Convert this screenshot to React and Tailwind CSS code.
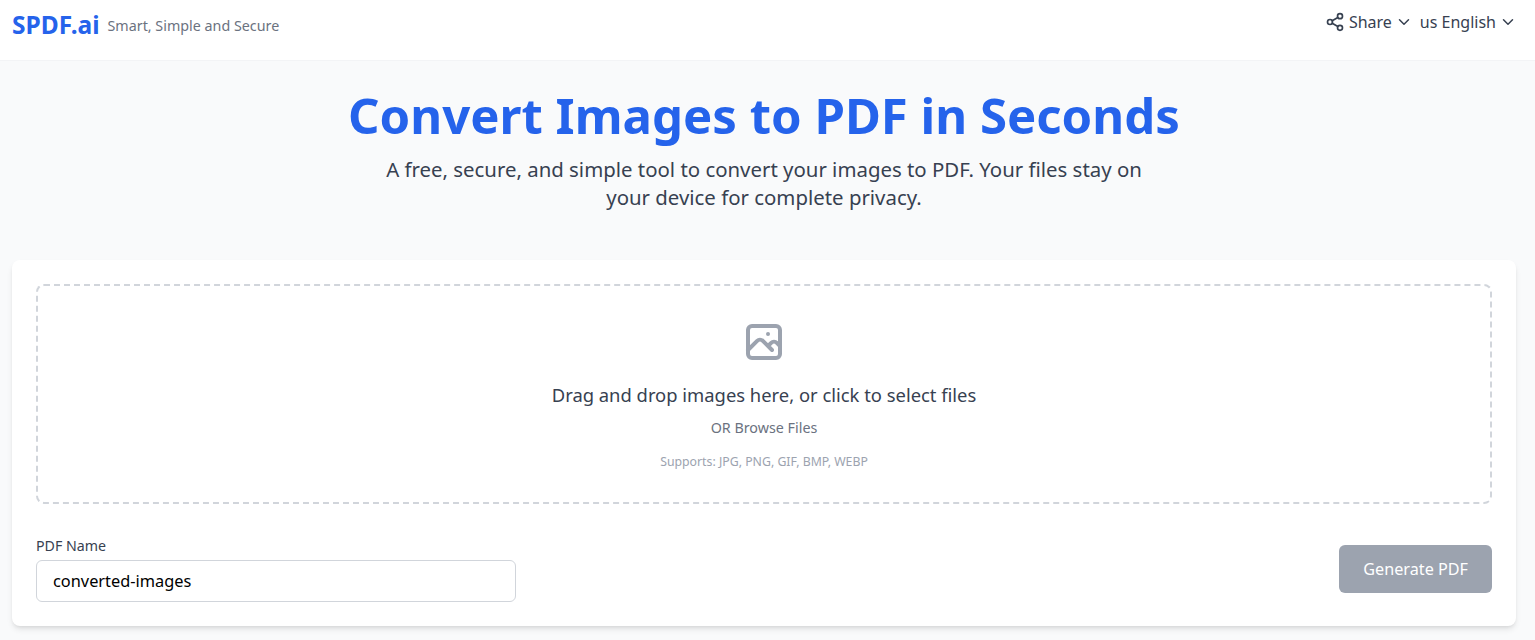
import React from "react";
import { Share2, ChevronDown } from "lucide-react";

export default function App() {
  return (
    <div className="min-h-[640px] bg-[#f9fafb] font-['Noto_Sans',sans-serif]">
      <header className="h-[61px] bg-white border-b border-[#f3f4f6] pl-3 pr-[18px] flex items-start justify-between">
        <div className="flex items-center gap-2 h-[51px]">
          <span className="text-[24.5px] font-bold text-[#2563eb]">SPDF.ai</span>
          <span className="text-[14.3px] text-[#6b7280]">Smart, Simple and Secure</span>
        </div>
        <div className="flex items-center gap-[7px] h-[44px] text-base text-[#374151]">
          <div className="flex items-center">
            <Share2 size={20} />
            <span className="ml-1">Share</span>
            <ChevronDown size={18} className="ml-[3px]" />
          </div>
          <div className="flex items-center">
            <span>us English</span>
            <ChevronDown size={18} className="ml-[3px]" />
          </div>
        </div>
      </header>
      <main className="pl-3 pr-[19px]">
        <section className="flex flex-col items-center pt-[23px] h-[199px]">
          <h1 className="text-[49.1px] leading-[62px] font-bold text-[#2563eb]">Convert Images to PDF in Seconds</h1>
          <p className="mt-[9px] max-w-3xl text-center text-[20.4px] leading-[28px] text-[#374151]">
            A free, secure, and simple tool to convert your images to PDF. Your files stay on your device for complete privacy.
          </p>
        </section>
        <section className="bg-white rounded-lg shadow-md p-6 h-[366px]">
          <div className="h-[220px] border-2 border-dashed border-[#d1d5db] rounded-lg flex flex-col items-center pt-[32px]">
            <svg width="48" height="48" viewBox="0 0 24 24" fill="none" stroke="currentColor" strokeWidth="2" strokeLinecap="round" strokeLinejoin="round" className="text-[#9ca3af]">
              <path d="M4 16l4.586-4.586a2 2 0 012.828 0L16 16m-2-2l1.586-1.586a2 2 0 012.828 0L20 14m-6-6h.01M6 20h12a2 2 0 002-2V6a2 2 0 00-2-2H6a2 2 0 00-2 2v12a2 2 0 002 2z" />
            </svg>
            <p className="mt-[15px] text-[18.4px] leading-[28px] text-[#374151]">Drag and drop images here, or click to select files</p>
            <p className="mt-[9px] text-[14.3px] leading-[20px] text-[#6b7280]">OR Browse Files</p>
            <p className="mt-4 text-[12.3px] leading-[16px] text-[#9ca3af]">Supports: JPG, PNG, GIF, BMP, WEBP</p>
          </div>
          <div className="mt-[32px] flex items-start justify-between">
            <div className="w-[480px]">
              <label className="block text-[14.2px] leading-[20px] text-[#374151] mb-[4px]">PDF Name</label>
              <input
                readOnly
                value="converted-images"
                className="w-full h-[42px] px-4 border border-[#d1d5db] rounded-md bg-white text-[16.35px] text-black outline-none"
              />
            </div>
            <button className="mt-[9px] h-12 px-6 rounded-md bg-[#9ca3af] text-[16.2px] text-white">Generate PDF</button>
          </div>
        </section>
      </main>
    </div>
  );
}
